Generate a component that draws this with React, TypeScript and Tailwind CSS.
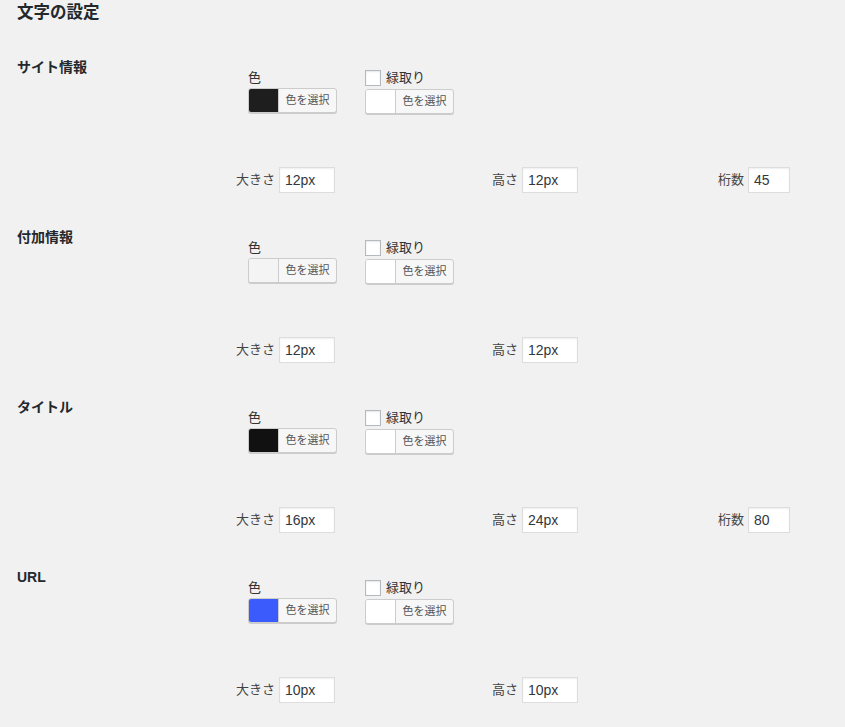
import React from "react";

interface Section {
  label: string;
  swatch: string;
  size: string;
  height: string;
  digits?: string;
}

const sections: Section[] = [
  { label: "サイト情報", swatch: "bg-[#1e1e1e]", size: "12px", height: "12px", digits: "45" },
  { label: "付加情報", swatch: "bg-[#f4f4f4]", size: "12px", height: "12px" },
  { label: "タイトル", swatch: "bg-[#111111]", size: "16px", height: "24px", digits: "80" },
  { label: "URL", swatch: "bg-[#3b5bfd]", size: "10px", height: "10px" },
];

const font = "font-['Liberation_Sans','Noto_Sans_CJK_JP',sans-serif]";

function ColorButton({ swatch }: { swatch: string }) {
  return (
    <div className="flex h-[25px] w-[89px] overflow-hidden rounded-[3px] border border-[#cccccc] bg-[#f7f7f7] shadow-[0_1px_0_#cccccc]">
      <span className={`w-[30px] border-r border-[#cccccc] ${swatch}`} />
      <span className="flex flex-1 items-center justify-center text-[11px] text-[#555555]">
        色を選択
      </span>
    </div>
  );
}

function Field({ label, value, width }: { label: string; value: string; width: string }) {
  return (
    <div className="flex items-center gap-[4px]">
      <span className="text-[13px] text-[#444444]">{label}</span>
      <div
        className={`flex h-[26px] ${width} items-center border border-[#dddddd] bg-white px-[5px] text-[14px] text-[#32373c] shadow-[inset_0_1px_2px_rgba(0,0,0,0.07)]`}
      >
        {value}
      </div>
    </div>
  );
}

export default function App() {
  return (
    <div className={`min-h-[727px] bg-[#f1f1f1] text-[#23282d] ${font}`}>
      <h2 className="pl-[17px] text-[16.5px] font-bold leading-[24px]">文字の設定</h2>

      <div className="mt-[33px]">
        {sections.map((s) => (
          <div key={s.label} className="h-[170px]">
            <div className="flex">
              <div className="w-[248px] pl-[17px] text-[14px] font-bold leading-[20px]">
                {s.label}
              </div>
              <div className="flex gap-[28px] pt-[12px]">
                <div>
                  <div className="h-[18px] text-[13px] leading-[18px] text-[#333333]">色</div>
                  <div className="mt-[1px]">
                    <ColorButton swatch={s.swatch} />
                  </div>
                </div>
                <div>
                  <div className="flex h-[18px] items-center gap-[5px]">
                    <span className="h-[16px] w-[16px] border border-[#b4b9be] bg-white shadow-[inset_0_1px_2px_rgba(0,0,0,0.1)]" />
                    <span className="text-[13px] leading-[18px] text-[#333333]">緑取り</span>
                  </div>
                  <div className="mt-[2px]">
                    <ColorButton swatch="bg-white" />
                  </div>
                </div>
              </div>
            </div>

            <div className="ml-[236px] mt-[53px] flex">
              <div className="w-[256px]">
                <Field label="大きさ" value={s.size} width="w-[56px]" />
              </div>
              <div className="w-[226px]">
                <Field label="高さ" value={s.height} width="w-[56px]" />
              </div>
              {s.digits && <Field label="桁数" value={s.digits} width="w-[42px]" />}
            </div>
          </div>
        ))}
      </div>
    </div>
  );
}
